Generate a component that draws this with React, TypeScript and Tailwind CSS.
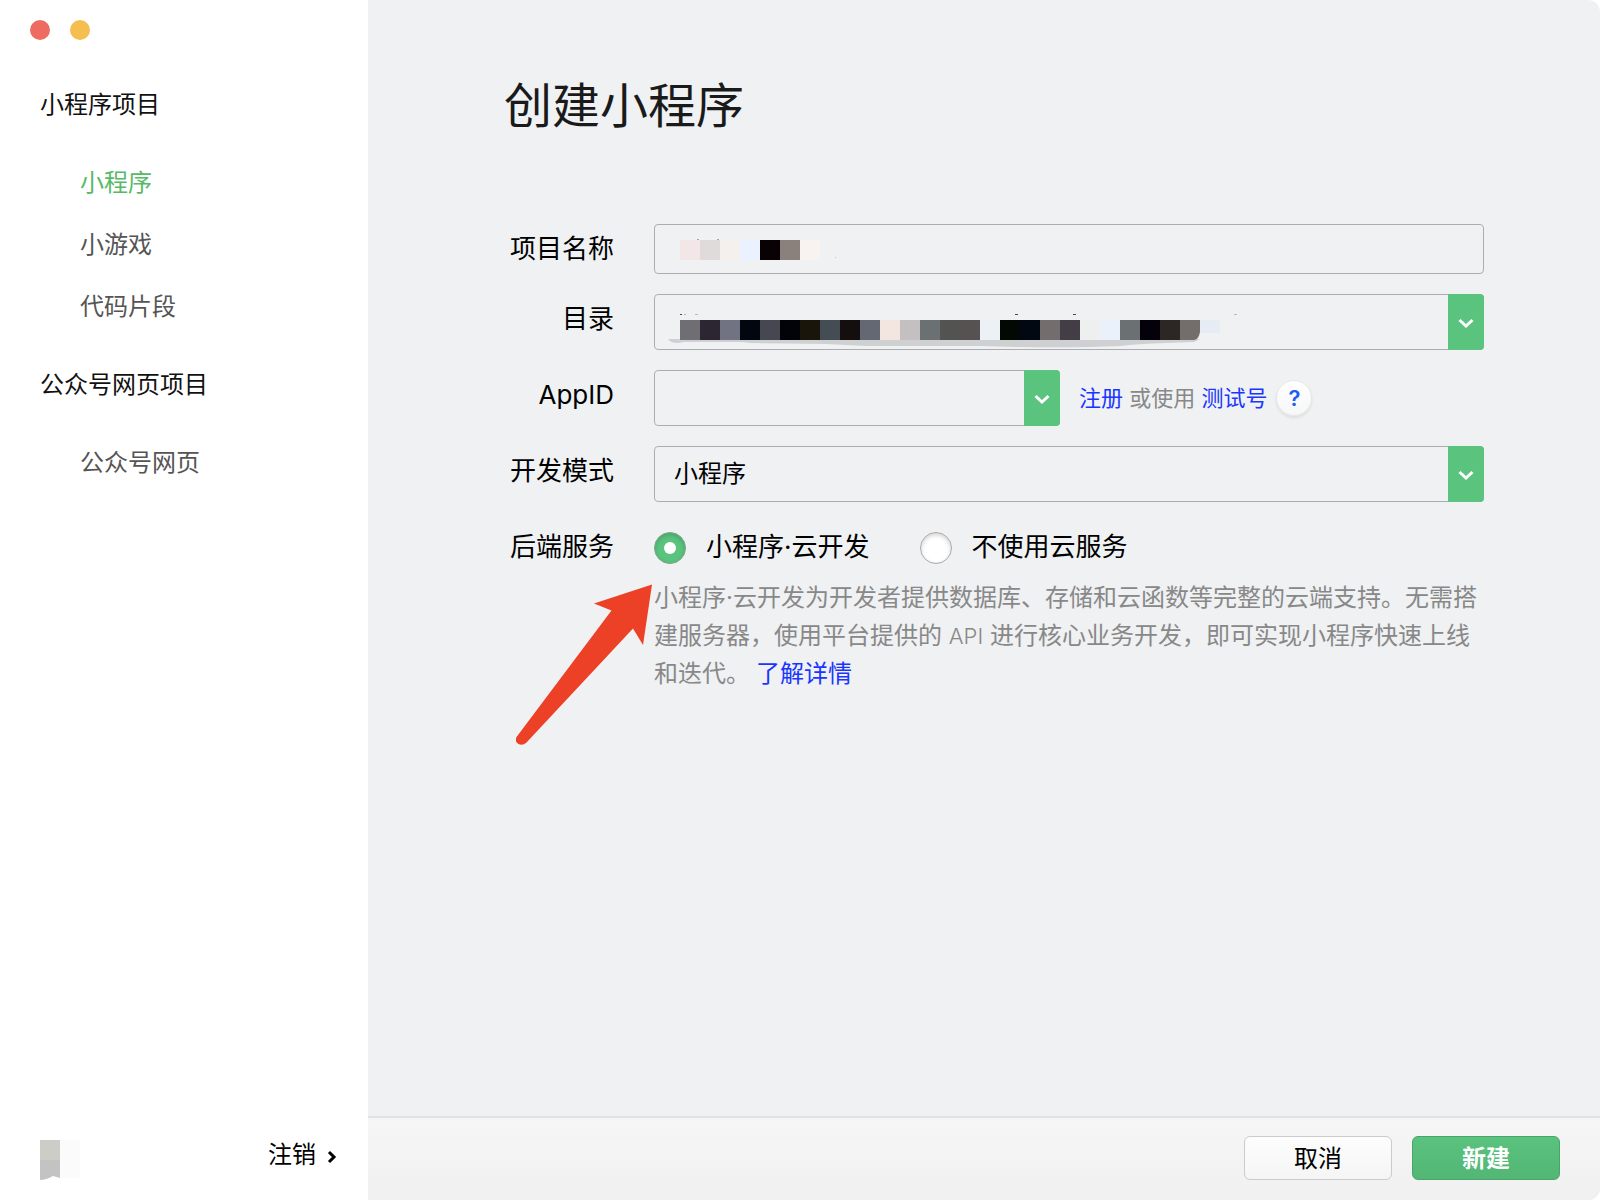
import type { ReactNode } from "react";
import { clsx } from "clsx";

interface NavGroup {
  title: string;
  items: string[];
}

const navGroups: NavGroup[] = [
  { title: "小程序项目", items: ["小程序", "小游戏", "代码片段"] },
  { title: "公众号网页项目", items: ["公众号网页"] },
];

const activeItem = "小程序";

const nameCells = ["#f2e6e6", "#e0dbdb", "#f3f0ed", "#eaf2ff", "#080204", "#8a807c", "#f8f2f1"];

const directoryCells = [
  "#6f6e72", "#2b2631", "#727382", "#02060f", "#454850", "#020308", "#19150a",
  "#454d54", "#150e0f", "#646872", "#f3e5e0", "#c4c0c1", "#6b7072", "#535352",
  "#575252", "#ebf1f4", "#020803", "#010811", "#736e6d", "#433e45", "#eef0ef",
  "#ebf1fb", "#6b7072", "#05010a", "#2c2724",
];

function NameMosaic() {
  return (
    <svg aria-hidden="true" width="200" height="24" viewBox="0 0 200 24" className="pointer-events-none absolute top-3.5 left-6.5">
      {nameCells.map((color, i) => (
        <rect key={i} x={i * 20} y="2" width="20" height="20" fill={color} />
      ))}
      <path d="M17 1.5h2M37 1.5h2" stroke="#a5a5a7" />
      <path d="M155 19.5h1" stroke="#c5c6c8" />
    </svg>
  );
}

function DirectoryMosaic() {
  return (
    <svg aria-hidden="true" width="580" height="38" viewBox="0 0 580 38" className="pointer-events-none absolute top-4 left-3">
      {/* smudge under the cells, fading out to the right */}
      <path
        d="M2 29H534L528 32L500 33Q470 34 455 36Q410 38 350 37L315 36H200L160 34L85 33L75 32H18Q6 35 2 29Z"
        fill="#cfd0d2"
      />
      {directoryCells.map((color, i) => (
        <rect key={i} x={14 + i * 20} y="10" width="20" height="20" fill={color} />
      ))}
      <path d="M514 10h20v12q-1 7-6 8h-14z" fill="#736e6b" />
      <path d="M534 10h20v13h-20z" fill="#e7ebf4" />
      <path d="M14 4.5h2M349 4.5h3M407 4.5h3" stroke="#4b4b4f" />
      <path d="M18 4.5h2M29 4.5h3M568 4.5h3" stroke="#b9babc" />
    </svg>
  );
}

function DropArrow() {
  return (
    <span className="pointer-events-none absolute inset-y-0 right-0 flex w-9 items-center justify-center rounded-r-sm bg-[#5ac37e]">
      <svg aria-hidden="true" width="18" height="12" viewBox="0 0 18 12" fill="none" stroke="#fff" strokeWidth="3">
        <path d="M2.500 4L9 10L15.500 4" />
      </svg>
    </span>
  );
}

function PointerArrow() {
  return (
    <svg aria-hidden="true" width="138" height="162" viewBox="0 0 138 162" className="pointer-events-none absolute top-1 right-full">
      <path
        d="M136 1.500L78 20.500L95.500 27.500L0.500 154Q-1.500 159 2.500 161Q6.500 163 10.500 159.500L117 45.500L127 62Z"
        fill="#ec4127"
      />
    </svg>
  );
}

function FormRow({ label, htmlFor, children }: { label: string; htmlFor?: string; children: ReactNode }) {
  return (
    <div className="flex items-start gap-10">
      {htmlFor ? (
        <label htmlFor={htmlFor} className="w-[110px] shrink-0 text-right text-[26px] leading-[50px]">
          {label}
        </label>
      ) : (
        <span className="w-[110px] shrink-0 text-right text-[26px] leading-[50px]">{label}</span>
      )}
      <div className="relative min-w-0 flex-1">{children}</div>
    </div>
  );
}

function SelectField({ id, options, className }: { id: string; options: string[]; className?: string }) {
  return (
    <div className={clsx("relative", className)}>
      <select
        id={id}
        className="block h-14 w-full appearance-none rounded border border-[#acadaf] bg-transparent pr-12 pl-[19px] text-2xl outline-none"
      >
        {options.map((option) => (
          <option key={option}>{option}</option>
        ))}
      </select>
      <DropArrow />
    </div>
  );
}

function BackendOption({ label, defaultChecked }: { label: string; defaultChecked?: boolean }) {
  return (
    <label className="flex items-center gap-5 text-[26px] leading-[50px]">
      <span className="relative mt-0.5 flex size-8 items-center justify-center">
        <input
          type="radio"
          name="backend"
          defaultChecked={defaultChecked}
          className="peer size-8 appearance-none rounded-full border border-[#a9a9a9] bg-white shadow-[inset_0_2px_4px_rgba(0,0,0,0.18)] checked:border-[#7fa58c] checked:bg-[#5ac37e]"
        />
        <span className="pointer-events-none absolute hidden size-3 rounded-full bg-white peer-checked:block" />
      </span>
      {label}
    </label>
  );
}

function Sidebar() {
  return (
    <aside className="flex w-[368px] shrink-0 flex-col bg-white">
      <div className="flex gap-5 px-7.5 pt-5">
        <button type="button" aria-label="关闭" className="size-5 rounded-full bg-[#ed6b60]" />
        <button type="button" aria-label="最小化" className="size-5 rounded-full bg-[#f5bf50]" />
      </div>
      <nav className="mt-12.5 flex flex-col gap-12 px-10 text-2xl leading-[30px]">
        {navGroups.map((group) => (
          <section key={group.title}>
            <h2 className="text-[#111]">{group.title}</h2>
            <ul className="mt-12 flex flex-col gap-8 pl-10">
              {group.items.map((item) => (
                <li key={item}>
                  <a href="#" className={clsx("block", item === activeItem ? "text-[#57b966]" : "text-[#555]")}>
                    {item}
                  </a>
                </li>
              ))}
            </ul>
          </section>
        ))}
      </nav>
      <div className="mt-auto flex items-center justify-between pr-7.5 pb-5 pl-10">
        <svg aria-hidden="true" width="40" height="40" viewBox="0 0 40 40">
          <path d="M0 0h20v20H0z" fill="#cccdc7" />
          <path d="M0 20h20v18l-7-2q-7 4-13 4z" fill="#c3c3c3" />
          <path d="M20 0h20v38H20z" fill="#fbfbfb" />
        </svg>
        <button type="button" className="-mt-2.5 flex items-center gap-2.5 text-2xl leading-8">
          注销
          <svg aria-hidden="true" width="12" height="14" viewBox="0 0 12 14" fill="none" stroke="#000" strokeWidth="3" className="mt-1">
            <path d="M3 2L8 7L3 12" />
          </svg>
        </button>
      </div>
    </aside>
  );
}

export default function App() {
  return (
    <div className="flex min-h-screen bg-white font-['Inter','Noto_Sans_CJK_SC',sans-serif] text-black">
      <Sidebar />
      <main className="flex min-w-0 flex-1 flex-col overflow-hidden rounded-r-xl bg-[#eff1f3]">
        <div className="pt-18.5 pr-29 pl-34">
          <h1 className="text-5xl leading-16 text-[#1a1a1a]">创建小程序</h1>
          <form className="mt-21.5 flex flex-col gap-5">
            <FormRow label="项目名称" htmlFor="name">
              <input
                id="name"
                type="text"
                className="block h-[50px] w-full rounded border border-[#acadaf] bg-transparent px-5 text-2xl outline-none"
              />
              <NameMosaic />
            </FormRow>
            <FormRow label="目录" htmlFor="directory">
              <SelectField id="directory" options={[""]} />
              <DirectoryMosaic />
            </FormRow>
            <FormRow label="AppID" htmlFor="appid">
              <div className="flex items-center">
                <SelectField id="appid" options={[""]} className="w-[406px]" />
                <p className="ml-[19px] text-[22px] leading-8 text-[#888]">
                  <a href="#" className="text-[#1a35ff]">注册</a> 或使用 <a href="#" className="text-[#1a35ff]">测试号</a>
                </p>
                <button
                  type="button"
                  aria-label="帮助"
                  className="ml-[9px] flex size-9 items-center justify-center rounded-full border border-[#e6e6e6] bg-linear-to-b from-white to-[#f7f7f7] text-[22px] font-semibold text-[#1d5df5] shadow-[0_2px_3px_rgba(0,0,0,0.08)]"
                >
                  ?
                </button>
              </div>
            </FormRow>
            <FormRow label="开发模式" htmlFor="mode">
              <SelectField id="mode" options={["小程序"]} />
            </FormRow>
            <FormRow label="后端服务">
              <div className="flex gap-12.5" role="radiogroup" aria-label="后端服务">
                <BackendOption label="小程序·云开发" defaultChecked />
                <BackendOption label="不使用云服务" />
              </div>
              <div className="relative mt-[7px]">
                <p className="text-2xl leading-[38px] text-[#888]">
                  小程序·云开发为开发者提供数据库、存储和云函数等完整的云端支持。无需搭建服务器，使用平台提供的 <span className="text-[22px] font-light">API</span> 进行核心业务开发，即可实现小程序快速上线和迭代。
                  <a href="#" className="ml-1.5 text-[#1a35ff]">了解详情</a>
                </p>
                <PointerArrow />
              </div>
            </FormRow>
          </form>
        </div>
        <footer className="mt-auto flex justify-end gap-5 border-t-2 border-[#e2e2e2] bg-linear-to-b from-[#f6f6f6] to-[#f0f0f0] px-10 pt-4.5 pb-5">
          <button
            type="button"
            className="h-11 w-37 rounded-md border border-[#cbcbcb] bg-linear-to-b from-[#fdfdfd] to-[#f5f5f5] pt-0.5 text-2xl leading-8"
          >
            取消
          </button>
          <button
            type="button"
            className="h-11 w-37 rounded-md border border-[#4aa469] bg-linear-to-b from-[#5ac37e] to-[#52b675] pt-0.5 text-2xl leading-8 font-bold text-white"
          >
            新建
          </button>
        </footer>
      </main>
    </div>
  );
}
